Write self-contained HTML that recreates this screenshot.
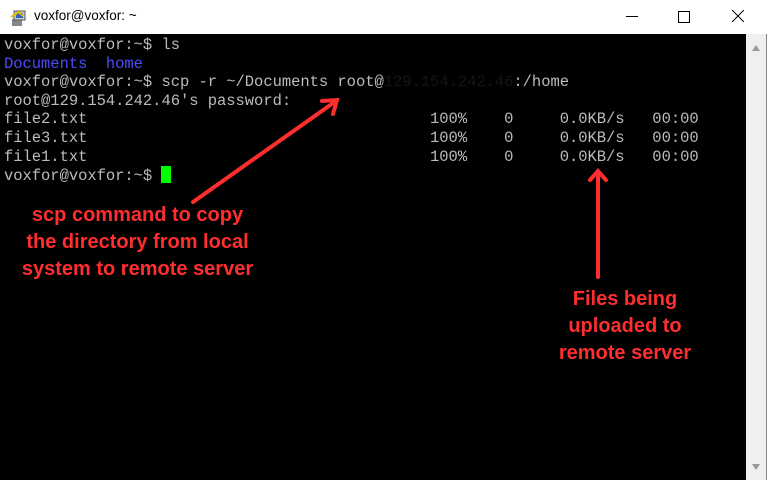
<!DOCTYPE html>
<html><head><style>
body{margin:0;width:768px;height:483px;background:#fff;position:relative;overflow:hidden;font-family:"Liberation Sans",sans-serif}
.title{position:absolute;left:0;top:0;width:768px;height:34px;background:#fff}
.term{position:absolute;left:0;top:34px;width:746px;height:446px;background:#000}
.sb{position:absolute;left:746px;top:34px;width:20px;height:446px;background:#efefef;border-right:1px solid #888}
pre{margin:0;position:absolute;left:4px;top:36px;font-family:"Liberation Mono",monospace;font-size:15.5px;line-height:18.6px;color:#bbb;letter-spacing:-0.04px}
.b{color:#4a4aff}
.cur{display:inline-block;width:10px;height:17px;background:#0f0;vertical-align:-3px}
.ann{position:absolute;color:#ff2e2e;font-size:20px;font-weight:bold;text-align:center;line-height:27px;font-family:"Liberation Sans",sans-serif;white-space:nowrap}
</style></head><body>
<div class="title">
<svg style="position:absolute;left:9px;top:8px" width="20" height="20"><rect x="3" y="11" width="10" height="7" fill="#888"/><rect x="5" y="3" width="11" height="9" fill="#ccc" stroke="#555"/><rect x="7" y="5" width="7" height="5" fill="#3060c0"/><path d="M2 9 L10 4 L14 8" stroke="#e0c000" stroke-width="2" fill="none"/></svg>
<div style="position:absolute;left:34px;top:8px;font-size:13.5px;color:#000">voxfor@voxfor: ~</div>
<div style="position:absolute;left:626px;top:16px;width:12px;height:1px;background:#000"></div>
<div style="position:absolute;left:678px;top:11px;width:10px;height:10px;border:1px solid #000"></div>
<svg style="position:absolute;left:732px;top:10px" width="12" height="12"><path d="M0 0L12 12M12 0L0 12" stroke="#000" stroke-width="1"/></svg>
</div>
<div class="term"></div>
<div class="sb"><div style="position:absolute;left:6px;top:11px;border:4px solid transparent;border-bottom:6px solid #999;border-top:0"></div><div style="position:absolute;left:6px;bottom:10px;border:4px solid transparent;border-top:6px solid #999;border-bottom:0"></div></div>
<pre>voxfor@voxfor:~$ ls
<span class="b">Documents  home</span>
voxfor@voxfor:~$ scp -r ~/Documents root@<span style="color:#151515">129.154.242.46</span>:/home
root@129.154.242.46's password:
file2.txt                                     100%    0     0.0KB/s   00:00
file3.txt                                     100%    0     0.0KB/s   00:00
file1.txt                                     100%    0     0.0KB/s   00:00
voxfor@voxfor:~$ <span class="cur"></span></pre>
<svg style="position:absolute;left:0;top:0" width="768" height="483">
<path d="M193 202 L336 101" stroke="#ff2e2e" stroke-width="4" stroke-linecap="round"/>
<path d="M322 101 L337 100 L333 114" stroke="#ff2e2e" stroke-width="4" fill="none" stroke-linecap="round"/>
<path d="M598 277 L598 172" stroke="#ff2e2e" stroke-width="4" stroke-linecap="round"/>
<path d="M590 180 L598 171 L606 180" stroke="#ff2e2e" stroke-width="4" fill="none" stroke-linecap="round"/>
</svg>
<div class="ann" style="left:0px;top:202px;width:275px">scp command to copy<br>the directory from local<br>system to remote server</div>
<div class="ann" style="left:530px;top:286px;width:190px">Files being<br>uploaded to<br>remote server</div>
</body></html>
